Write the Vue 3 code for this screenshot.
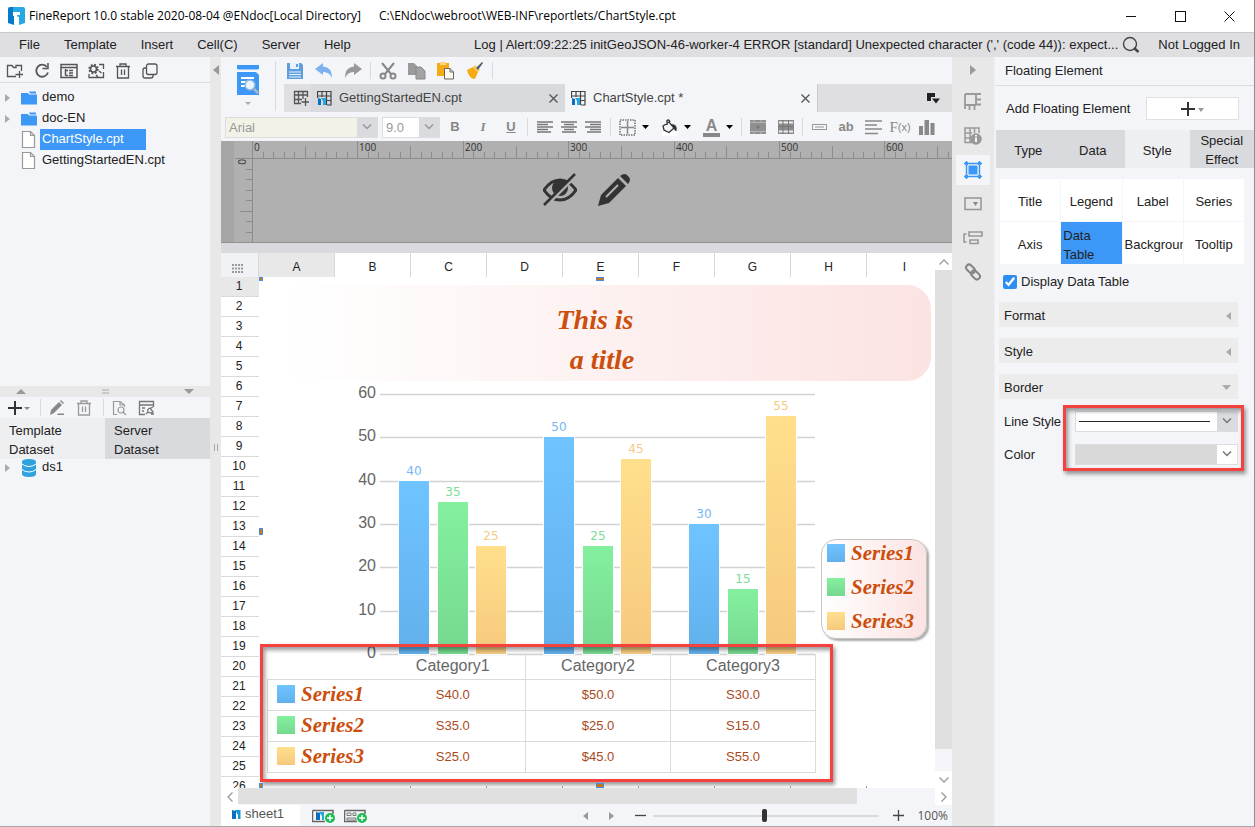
<script setup>
const menus = ['File', 'Template', 'Insert', 'Cell(C)', 'Server', 'Help']
const files = [
  { name: 'demo', folder: true },
  { name: 'doc-EN', folder: true },
  { name: 'ChartStyle.cpt', folder: false, active: true },
  { name: 'GettingStartedEN.cpt', folder: false },
]
const columns = ['A', 'B', 'C', 'D', 'E', 'F', 'G', 'H', 'I']
const rows = Array.from({ length: 26 }, (_, i) => i + 1)

const ticks = Array.from({ length: 67 }, (_, i) => ({
  x: Math.round(31 + i * 10.54),
  len: i % 10 === 0 ? 17 : i % 5 === 0 ? 12 : 6,
  label: i % 10 === 0 ? String(i * 10) : '',
}))
const sideTicks = Array.from({ length: 8 }, (_, i) => ({
  y: Math.round(17 + i * 10.54),
  len: i % 5 === 0 ? 12 : 6,
}))

const axis = [60, 50, 40, 30, 20, 10, 0]
const yOf = (v) => Math.round(273 - (v * 260) / 60)
const series = [
  { name: 'Series1', key: 'blue', label: '#76b8ee', values: [40, 50, 30], cells: ['S40.0', '$50.0', 'S30.0'] },
  { name: 'Series2', key: 'green', label: '#7ddc96', values: [35, 25, 15], cells: ['S35.0', '$25.0', 'S15.0'] },
  { name: 'Series3', key: 'gold', label: '#f4cb84', values: [25, 45, 55], cells: ['S25.0', '$45.0', 'S55.0'] },
]
const bars = series.flatMap((s, si) =>
  s.values.map((v, ci) => ({
    v,
    key: s.key,
    label: s.label,
    x: Math.round(140 + si * 38.5 + ci * 145),
    y: yOf(v),
    h: 273 - yOf(v),
  })),
)
const categories = ['Category1', 'Category2', 'Category3']
const mainTabs = ['Type', 'Data', 'Style', 'Special Effect']
const styleTabs = ['Title', 'Legend', 'Label', 'Series', 'Axis', 'Data Table', 'Backgroun', 'Tooltip']
</script>

<template>
  <div class="app">
    <header class="titlebar">
      <svg class="logo" width="17" height="18" viewBox="0 0 17 18">
        <path d="M0 2Q0 0 2 0H6V18L0 16Z" fill="#0878c8" />
        <path d="M5 0H15Q17 0 17 2V16L11 18V10L5 8Z" fill="#25a9e6" />
        <path d="M5 5H12V8H9V17H6V9H5Z" fill="#fff" />
      </svg>
      <span>FineReport 10.0 stable 2020-08-04 @ENdoc[Local Directory]</span>
      <span class="path">C:\ENdoc\webroot\WEB-INF\reportlets/ChartStyle.cpt</span>
      <div class="winbtns">
        <button aria-label="Minimize"><svg width="11" height="11"><path d="M0 5.500H10" stroke="#111" /></svg></button>
        <button aria-label="Maximize"><svg width="11" height="11"><rect x=".5" y=".5" width="10" height="10" fill="none" stroke="#111" /></svg></button>
        <button aria-label="Close"><svg width="11" height="11"><path d="M.5 .5L10.500 10.500M10.500 .5L.5 10.500" stroke="#111" /></svg></button>
      </div>
    </header>

    <nav class="menubar">
      <button v-for="m in menus" :key="m">{{ m }}</button>
      <span class="log">Log | Alert:09:22:25 initGeoJSON-46-worker-4 ERROR [standard] Unexpected character (',' (code 44)): expect...</span>
      <button aria-label="Search" class="search">
        <svg width="18" height="18" viewBox="0 0 18 18" fill="none" stroke="#444"><circle cx="8" cy="8" r="6.500" stroke-width="1.400" /><path d="M12 12L16.500 16" stroke-width="2.400" /></svg>
      </button>
      <a href="#login">Not Logged In</a>
    </nav>

    <main class="body">
      <aside class="left">
        <div class="tools top-tools">
          <button aria-label="New folder"><svg width="18" height="16" viewBox="0 0 18 16" class="ln"><path d="M10 13.500H1.500V2.500H6L7.500 4.500H10V2.500H15.500V8M9.500 11.500H17M13.500 8V15" stroke-width="1.300" /></svg></button>
          <button aria-label="Refresh"><svg width="16" height="16" viewBox="0 0 16 16" class="ln"><path d="M13 4A6 6 0 1 0 14 9.500" stroke-width="1.800" /><path d="M14 0V5.500H8.500" stroke-width="1.500" /></svg></button>
          <button aria-label="Tree view"><svg width="18" height="16" viewBox="0 0 18 16" class="ln"><path d="M1 1.500H17V14.500H1ZM1 4.500H17" stroke-width="1.500" /><path d="M5.500 6V12.500M5.500 7.500H8M5.500 12.500H8M9 7.500H13M9 10H13M9 12.500H13" stroke-width="1.500" /></svg></button>
          <button aria-label="Settings"><svg width="18" height="16" viewBox="0 0 18 16" class="ln"><circle cx="6.500" cy="6" r="4.200" stroke-dasharray="1.800 1.500" stroke-width="2" /><circle cx="6.500" cy="6" r="3" stroke-width="1.600" /><path d="M12 1.500H16.500V6M2 11V14.500H16.500V9M9 12L11 14M12 8L14.500 10" stroke-width="1.300" /></svg></button>
          <button aria-label="Delete"><svg width="16" height="16" viewBox="0 0 16 16" class="ln"><path d="M1 3.500H15M5 3V1H11V3M2.500 4V15H13.500V4M6.500 6.500V12M9.500 6.500V12" stroke-width="1.300" /></svg></button>
          <button aria-label="Copy"><svg width="16" height="16" viewBox="0 0 16 16" class="ln"><rect x="4.500" y="1" width="10.500" height="10.500" rx="2" stroke-width="1.300" /><path d="M4 5H3Q1 5 1 7V13Q1 15 3 15H9Q11 15 11 13V12" stroke-width="1.300" /></svg></button>
        </div>
        <ul class="tree">
          <li v-for="f in files" :key="f.name">
            <svg class="expander" width="6" height="8"><path v-if="f.folder" d="M0 0L5 4L0 8Z" fill="#aaa" /></svg>
            <svg v-if="f.folder" width="16" height="14" viewBox="0 0 16 14"><path d="M0 2H7L8 3.500H16V13.500H0Z" fill="#3d97f7" /><path d="M8 .5H15V2.500H9Z" fill="#3d97f7" /></svg>
            <svg v-else width="16" height="18" viewBox="0 0 16 18"><path d="M1.500 .5H9.500L13.500 4.500V16.500H1.500ZM9.500 .5V4.500H13.500" fill="#fff" stroke="#999" stroke-width="1.200" /></svg>
            <a href="#file" :class="{ active: f.active }">{{ f.name }}</a>
          </li>
        </ul>
        <div class="divider">
          <svg width="10" height="5"><path d="M0 5L5 0L10 5Z" fill="#999" /></svg>
          <svg width="7" height="5"><path d="M0 1H7M0 4H7" stroke="#aaa" /></svg>
          <svg width="10" height="5"><path d="M0 0L5 5L10 0Z" fill="#999" /></svg>
        </div>
        <div class="tools data-tools">
          <button aria-label="Add dataset"><svg width="24" height="16" viewBox="0 0 24 16"><path d="M8 1V15M1 8H15" stroke="#333" stroke-width="2" /><path d="M17 7H23L20 10Z" fill="#888" /></svg></button>
          <i class="sep"></i>
          <button aria-label="Edit"><svg width="16" height="16" viewBox="0 0 16 16"><path d="M1 15L2 10L10 2L13 5L5 13ZM11 1L12 0L15 3L14 4ZM9 13.500H15V15H8Z" fill="#888" /></svg></button>
          <button aria-label="Delete dataset"><svg width="16" height="16" viewBox="0 0 16 16" fill="none" stroke="#999" stroke-width="1.300"><path d="M1 3.500H15M5 3V1H11V3M2.500 4V15H13.500V4M6.500 6.500V12M9.500 6.500V12" /></svg></button>
          <i class="sep"></i>
          <button aria-label="Preview data"><svg width="15" height="16" viewBox="0 0 15 16" fill="none" stroke="#999" stroke-width="1.200"><path d="M5 14.500H1.500V1.500H8L12.500 5V7M8 1.500V5H12" /><circle cx="9" cy="10" r="3" /><path d="M11 12L14 15" /></svg></button>
          <button aria-label="Configure data"><svg width="17" height="16" viewBox="0 0 17 16" fill="none" stroke="#777" stroke-width="1.300"><path d="M7 14.500H1.500V1.500H15.500V7M1.500 5H15.500M4 8H7M4 11H6" /><path d="M8 14L10 12Q9 9 12 8L15 12Q13 14 10 12M13 14H16M13 8L15 7" /></svg></button>
        </div>
        <div class="ds-tabs">
          <button class="on">Template<br />Dataset</button>
          <button>Server<br />Dataset</button>
        </div>
        <ul class="tree ds">
          <li>
            <svg class="expander" width="6" height="8"><path d="M0 0L5 4L0 8Z" fill="#aaa" /></svg>
            <svg width="16" height="18" viewBox="0 0 16 18"><path d="M1 3Q1 0 8 0T15 3V15Q15 18 8 18T1 15Z" fill="#2ea2dc" /><path d="M1 5Q4 7.500 8 7.500T15 5M1 10.500Q4 13 8 13T15 10.500" fill="none" stroke="#fff" /></svg>
            <a href="#ds1">ds1</a>
          </li>
        </ul>
      </aside>

      <div class="gutter">
        <svg width="6" height="10"><path d="M6 0V10L0 5Z" fill="#999" /></svg>
        <svg width="4" height="7"><path d="M.5 0V7M3.500 0V7" stroke="#aaa" /></svg>
      </div>

      <section class="center">
        <div class="topbar">
          <button class="preview" aria-label="Preview">
            <svg width="24" height="44" viewBox="0 0 24 44"><path d="M1 1H23V4.500L22 5.500H2L1 4.500Z" fill="#3d97f7" /><path d="M1 8H20L23 11V31H1Z" fill="#3d97f7" /><path d="M5 14H18M5 18H14M5 22H10" stroke="#fff" stroke-width="2" /><circle cx="14" cy="21" r="5" fill="#eaf4ff" stroke="#8bb5df" stroke-width="1.500" /><path d="M18 25L22 29" stroke="#aeb9c4" stroke-width="2.500" /><path d="M9 38H15L12 41Z" fill="#aaa" /></svg>
          </button>
          <div class="topright">
            <div class="quick">
              <button aria-label="Save"><svg width="18" height="18" viewBox="0 0 18 18"><path d="M1 1H15L17 3V17H1Z" fill="#5f9ddd" /><path d="M4 1H13V7H4Z" fill="#e8f3ff" /><path d="M10 2H12V5H10Z" fill="#5f9ddd" /><path d="M3 10H15M3 12.500H15M3 15H15" stroke="#e8f3ff" /></svg></button>
              <button aria-label="Undo"><svg width="18" height="16" viewBox="0 0 18 16"><path d="M0 6L8 0V3.500Q17 4 17 15Q14 8.500 8 9V12Z" fill="#7cb3ef" /></svg></button>
              <button aria-label="Redo"><svg width="18" height="16" viewBox="0 0 18 16"><path d="M18 6L10 0V3.500Q1 4 1 15Q4 8.500 10 9V12Z" fill="#999" /></svg></button>
              <i class="sep"></i>
              <button aria-label="Cut"><svg width="18" height="18" viewBox="0 0 18 18" fill="none" stroke="#888" stroke-width="2"><path d="M3 1L12 12M15 1L6 12" /><circle cx="4" cy="14" r="2.500" /><circle cx="14" cy="14" r="2.500" /></svg></button>
              <button aria-label="Copy cells"><svg width="18" height="18" viewBox="0 0 18 18"><path d="M0 1H6L9 4V13H0Z" fill="#9a9a9a" /><path d="M8 5H13L17 9V17H8Z" fill="#a3a3a3" stroke="#888" /></svg></button>
              <button aria-label="Paste"><svg width="18" height="18" viewBox="0 0 18 18"><path d="M0 1H12V14H0Z" fill="#f5ab13" /><path d="M3 0H9V3H3Z" fill="#f9d48a" /><path d="M7.500 6.500H13L16.500 10V17H7.500ZM13 6.500V10H16.500" fill="#fffbe8" stroke="#666" /></svg></button>
              <button aria-label="Format painter"><svg width="18" height="18" viewBox="0 0 18 18"><path d="M1 8L7 5L12 10L9 17Q3 17 1 8Z" fill="#f5ab13" /><path d="M7 5L9 3L14 8L12 10Z" fill="#f9c95e" /><path d="M10 6L16 0L17 1L12 8Z" fill="#555e70" /></svg></button>
              <i class="sep"></i>
            </div>
            <div class="tabs">
              <button class="newtab" aria-label="New template"><svg width="16" height="16" viewBox="0 0 16 16" class="ln"><path d="M8 13.500H1.500V1.500H14.500V7M1.500 5H14.500M1.500 9.500H9M5.500 1.500V13.500M10 1.500V9M8.500 12H16M12.500 8V16" stroke-width="1.300" /></svg></button>
              <div class="tab" v-for="(t, i) in ['GettingStartedEN.cpt', 'ChartStyle.cpt *']" :key="t" :class="{ on: i === 1 }">
                <svg width="15" height="15" viewBox="0 0 15 15"><path d="M.5 7V.5H14V14H10M.5 5H14M5 .5V6M9.500 .5V14M9.500 9.500H14" fill="none" stroke="#444" stroke-width="1.200" /><path d="M1 7L4 8V14H1Z" fill="#0870be" /><path d="M4 7H9V14H6V10Z" fill="#25a6e5" /></svg>
                <button class="name">{{ t }}</button>
                <button class="x" aria-label="Close tab"><svg width="9" height="9"><path d="M.5 .5L8.500 8.500M8.500 .5L.5 8.500" stroke="#555" stroke-width="1.300" /></svg></button>
              </div>
              <button class="more" aria-label="Tab list"><svg width="13" height="11" viewBox="0 0 13 11"><path d="M0 0H8V4H4V8H0Z" fill="#222" /><path d="M5 5.500H13L9 10.500Z" fill="#222" /></svg></button>
            </div>
          </div>
        </div>

        <div class="format">
          <div class="combo font">
            <select aria-label="Font" disabled><option>Arial</option></select>
            <span class="arr"><svg width="10" height="6"><path d="M1 .5L5 4.500L9 .5" fill="none" stroke="#999" stroke-width="1.500" /></svg></span>
          </div>
          <div class="combo size">
            <select aria-label="Font size" disabled><option>9.0</option></select>
            <span class="arr"><svg width="10" height="6"><path d="M1 .5L5 4.500L9 .5" fill="none" stroke="#999" stroke-width="1.500" /></svg></span>
          </div>
          <div class="g biu">
            <button><b>B</b></button><button><em>I</em></button><button><u>U</u></button>
          </div>
          <i class="sep"></i>
          <div class="g al">
            <button aria-label="Align left"><svg width="16" height="12"><path d="M0 1H16M0 3.500H11M0 6H16M0 8.500H11M0 11H14" stroke="#777" stroke-width="1.300" /></svg></button>
            <button aria-label="Align center"><svg width="16" height="12"><path d="M0 1H16M3 3.500H13M0 6H16M3 8.500H13M1 11H15" stroke="#777" stroke-width="1.300" /></svg></button>
            <button aria-label="Align right"><svg width="16" height="12"><path d="M0 1H16M5 3.500H16M0 6H16M5 8.500H16M2 11H16" stroke="#777" stroke-width="1.300" /></svg></button>
          </div>
          <i class="sep"></i>
          <div class="g split">
            <button aria-label="Borders"><svg width="17" height="17"><rect x="1" y="1" width="15" height="15" fill="none" stroke="#333" stroke-dasharray="1.500 1" /><path d="M8.500 2V15M2 8.500H15" stroke="#888" stroke-width="1.500" /></svg><svg width="7" height="4"><path d="M0 0H7L3.500 4Z" /></svg></button>
            <button aria-label="Fill colour"><svg width="17" height="17"><path d="M1 13H17V17H1Z" fill="#fff" /><path d="M2 7L8 3L13 9L8 13.500L3 11ZM6 6V1.500Q8 0 9 3" fill="none" stroke="#333" stroke-width="1.300" /><path d="M10 5Q17 5 15.500 12Q13 12 13 9Z" fill="#333" /></svg><svg width="7" height="4"><path d="M0 0H7L3.500 4Z" /></svg></button>
            <button aria-label="Font colour"><span class="fa">A</span><svg width="7" height="4"><path d="M0 0H7L3.500 4Z" /></svg></button>
          </div>
          <i class="sep"></i>
          <div class="g biu">
            <button aria-label="Merge"><svg width="16" height="14"><rect width="16" height="14" fill="#909090" /><path d="M0 2.500H16M0 11.500H16M4 0V3M11 0V3M4 11V14M11 11V14" stroke="#b4b4b4" /><path d="M8 5V9M6 7H10" stroke="#777" /></svg></button>
            <button aria-label="Unmerge"><svg width="16" height="14"><rect width="16" height="14" fill="#8c8c8c" /><path d="M1 2.500H15M1 11.500H15" stroke="#eee" stroke-width="2" /><path d="M0 6.500H16M5 0V14M10.500 0V14" stroke="#777" /></svg></button>
          </div>
          <i class="sep"></i>
          <div class="g last">
            <button aria-label="Text field"><svg width="15" height="6"><rect x=".5" y=".5" width="14" height="5" fill="none" stroke="#999" /><path d="M3 3H12" stroke="#999" /></svg></button>
            <button class="ab">ab</button>
            <button aria-label="Rich text"><svg width="17" height="15"><path d="M0 1H17M0 5H12M0 9H17M0 13.500H13" stroke="#888" stroke-width="1.500" /></svg></button>
            <button class="fx">F<small>(x)</small></button>
            <button aria-label="Chart"><svg width="16" height="15"><path d="M0 6H4V15H0ZM5.500 0H10V15H5.500ZM11.500 3H15.500V15H11.500Z" fill="#888" /></svg></button>
          </div>
        </div>

        <div class="param">
          <svg class="rulers" width="100%" height="102">
            <rect width="13" height="102" fill="#a6a6a6" />
            <path d="M14 17.500H2000M31.500 0V102" stroke="#8a8a8a" />
            <g v-for="t in ticks" :key="t.x">
              <path :d="`M${t.x + 0.5} 17V${17 - t.len}`" stroke="#8c8c8c" />
              <text v-if="t.label" :x="t.x + 2" y="10">{{ t.label }}</text>
            </g>
            <path v-for="t in sideTicks" :key="t.y" :d="`M31 ${t.y + 0.5}H${31 - t.len}`" stroke="#8c8c8c" />
            <text transform="translate(17 18) rotate(90)">0</text>
            <path d="M0 101.500H2000" stroke="#919191" />
          </svg>
          <div class="param-actions">
            <button aria-label="Hide"><svg width="34" height="34" viewBox="0 0 34 34"><path d="M1 17Q8 7 17 7T33 17Q26 27 17 27T1 17Z" fill="none" stroke="#333" stroke-width="3" /><circle cx="17" cy="15" r="8" fill="#333" /><path d="M3 33L35 1" stroke="#b0b0b0" stroke-width="3" /><path d="M1 32L32 1" stroke="#333" stroke-width="2.500" /></svg></button>
            <button aria-label="Edit"><svg width="34" height="34" viewBox="0 0 34 34"><path d="M1 33L4 22L21 5L29 13L12 30Z" fill="#333" /><path d="M9 24L21 12" stroke="#b0b0b0" stroke-width="2" /><path d="M23 3Q28 -1 31 3Q35 6 31 11Z" fill="#333" /></svg></button>
          </div>
        </div>

        <div class="sheetwrap">
          <div class="sheet">
            <div class="cols">
              <span class="corner"><svg width="11" height="9"><path d="M0 1H11M0 4.500H11M0 8H11" stroke="#999" stroke-width="2" stroke-dasharray="2 1" /></svg></span>
              <span v-for="c in columns" :key="c" class="col" :class="{ sel: c === 'A' }">{{ c }}</span>
            </div>
            <div class="grid">
              <div class="rows">
                <span v-for="r in rows" :key="r" :class="{ sel: r === 1 }">{{ r }}</span>
              </div>
              <div class="canvas">
                <div class="chart">
                  <h1 class="ctitle">This is<br />&nbsp;&nbsp;a title</h1>
                  <svg class="plot" width="676" height="273">
                    <defs>
                      <linearGradient id="blue" x2="0" y2="1"><stop stop-color="#6fc4ff" /><stop offset="1" stop-color="#61b0ec" /></linearGradient>
                      <linearGradient id="green" x2="0" y2="1"><stop stop-color="#84f09f" /><stop offset="1" stop-color="#75d88f" /></linearGradient>
                      <linearGradient id="gold" x2="0" y2="1"><stop stop-color="#ffdf8c" /><stop offset="1" stop-color="#f6c97d" /></linearGradient>
                    </defs>
                    <g v-for="a in axis" :key="a">
                      <path :d="`M121 ${yOf(a) + 0.5}H556`" stroke="#d2d2d2" stroke-width="1.500" />
                      <text class="ax" x="117" :y="yOf(a) + 4">{{ a }}</text>
                    </g>
                    <g v-for="b in bars" :key="b.x">
                      <rect :x="b.x - 1" :y="b.y - 1" width="32" :height="b.h + 2" fill="#fff" />
                      <rect :x="b.x" :y="b.y" width="30" :height="b.h" :fill="`url(#${b.key})`" />
                      <text class="val" :x="b.x + 15" :y="b.y - 6" :fill="b.label">{{ b.v }}</text>
                    </g>
                  </svg>
                  <table class="dtable">
                    <thead>
                      <tr><th></th><th v-for="c in categories" :key="c">{{ c }}</th></tr>
                    </thead>
                    <tbody>
                      <tr v-for="s in series" :key="s.name">
                        <th><span class="item"><i class="sw" :class="s.key"></i>{{ s.name }}</span></th>
                        <td v-for="c in s.cells" :key="c">{{ c }}</td>
                      </tr>
                    </tbody>
                  </table>
                  <div class="legend">
                    <span v-for="s in series" :key="s.name" class="item"><i class="sw" :class="s.key"></i>{{ s.name }}</span>
                  </div>
                  <div class="mark data-mark"></div>
                </div>
                <i class="h h1"></i><i class="h h2"></i><i class="h h3"></i><i class="h h4"></i><i class="h h5"></i>
              </div>
            </div>
          </div>
          <div class="vscroll">
            <button aria-label="Scroll up"><svg width="10" height="6"><path d="M.5 5.500L5 1L9.500 5.500" fill="none" stroke="#999" stroke-width="1.300" /></svg></button>
            <i></i>
            <button aria-label="Scroll down"><svg width="10" height="6"><path d="M.5 .5L5 5L9.500 .5" fill="none" stroke="#999" stroke-width="1.300" /></svg></button>
          </div>
        </div>

        <div class="hscroll">
          <button aria-label="Scroll left"><svg width="6" height="10"><path d="M5.500 .5L1 5L5.500 9.500" fill="none" stroke="#999" stroke-width="1.300" /></svg></button>
          <i></i>
          <button aria-label="Scroll right"><svg width="6" height="10"><path d="M.5 .5L5 5L.5 9.500" fill="none" stroke="#999" stroke-width="1.300" /></svg></button>
        </div>

        <footer class="status">
          <button class="sheettab"><svg width="9" height="9"><path d="M0 0L4 1V9H0Z" fill="#0870be" /><path d="M3 0H8.500V9H6V5Z" fill="#1496d8" /></svg>sheet1</button>
          <button aria-label="Add sheet"><svg width="24" height="14"><path d="M.5 1.500H21V5M.5 1.500V12.500H13" fill="none" stroke="#666" stroke-width="1.500" /><path d="M4 3L8 4V11H4Z" fill="#0870be" /><path d="M7 3H12V11H10V7Z" fill="#25a6e5" /><circle cx="18" cy="9" r="5" fill="#1fbd55" /><path d="M15 9H21M18 6V12" stroke="#fff" stroke-width="1.500" /></svg></button>
          <button aria-label="Add form"><svg width="24" height="14"><path d="M.5 1.500H21V5M.5 1.500V12.500H13" fill="none" stroke="#666" stroke-width="1.500" /><path d="M3 4H7V6.500H3ZM9 4H12V6.500H9ZM3 9H12V11H3Z" fill="none" stroke="#777" /><circle cx="18" cy="9" r="5" fill="#1fbd55" /><path d="M15 9H21M18 6V12" stroke="#fff" stroke-width="1.500" /></svg></button>
          <div class="zoom">
            <button aria-label="Previous sheet"><svg width="5" height="8"><path d="M5 0V8L0 4Z" fill="#999" /></svg></button>
            <button aria-label="Next sheet"><svg width="5" height="8"><path d="M0 0V8L5 4Z" fill="#999" /></svg></button>
            <button aria-label="Zoom out"><svg width="11" height="11"><path d="M0 5.500H11" stroke="#444" stroke-width="1.300" /></svg></button>
            <input type="range" min="0" max="100" value="49" aria-label="Zoom" />
            <button aria-label="Zoom in"><svg width="11" height="11"><path d="M0 5.500H11M5.500 0V11" stroke="#444" stroke-width="1.300" /></svg></button>
            <span>100%</span>
          </div>
        </footer>
      </section>

      <nav class="strip">
        <button aria-label="Collapse" class="fold"><svg width="6" height="10"><path d="M0 0V10L6 5Z" fill="#999" /></svg></button>
        <button aria-label="Cell element"><svg width="18" height="18" fill="none" stroke="#999" stroke-width="1.800"><path d="M1 1H17M1 1V16M12 1V12M1 12H12M12 6.500H17M12 11.500H17M5.500 12V17M10.500 12V17" /></svg></button>
        <button aria-label="Cell attributes"><svg width="18" height="18" fill="none" stroke="#999" stroke-width="1.500"><path d="M8 15.500H1V1H15V6M1 6H8M1 11H7M6 1V15M10.500 1V6" /><circle cx="12" cy="12" r="5" fill="#999" /><path d="M12 8V9.500M12 10.500V15" stroke="#fff" stroke-width="1.800" /></svg></button>
        <button aria-label="Floating element" class="on"><svg width="18" height="18"><rect x="4.500" y="4.500" width="9" height="9" fill="#3d97f7" /><path d="M2.500 0V18M15.500 0V18M0 2.500H18M0 15.500H18" stroke="#3d97f7" stroke-width="1.500" /><path d="M1 1H4V4H1ZM14 1H17V4H14ZM1 14H4V17H1ZM14 14H17V17H14Z" fill="#3d97f7" /></svg></button>
        <button aria-label="Widget settings"><svg width="18" height="14"><rect x="1" y="1" width="16" height="11.500" fill="none" stroke="#999" stroke-width="1.600" /><path d="M9 5H14L11.500 9Z" fill="#888" /></svg></button>
        <button aria-label="Condition attributes"><svg width="20" height="14" fill="none" stroke="#999" stroke-width="1.600"><path d="M6 1H19V5H6ZM7 9H15V12.500H7ZM3.500 3H1V11H3.500" /></svg></button>
        <button aria-label="Hyperlink"><svg width="18" height="18" fill="none" stroke="#858585" stroke-width="2"><rect x="1.500" y="3" width="10" height="6" rx="3" transform="rotate(45 6.500 6)" /><rect x="6.500" y="9" width="10" height="6" rx="3" transform="rotate(45 11.500 12)" /></svg></button>
      </nav>

      <aside class="right">
        <h2>Floating Element</h2>
        <div class="add">
          <span id="add-label">Add Floating Element</span>
          <button aria-labelledby="add-label"><svg width="24" height="14"><path d="M7 0V14M0 7H14" stroke="#333" stroke-width="2" /><path d="M17 6H23L20 10Z" fill="#999" /></svg></button>
        </div>
        <div class="maintabs">
          <button v-for="t in mainTabs" :key="t" :class="{ on: t === 'Style' }">{{ t }}</button>
        </div>
        <div class="styletabs">
          <button v-for="t in styleTabs" :key="t" :class="{ on: t === 'Data Table', clip: t === 'Backgroun' }">{{ t }}</button>
        </div>
        <label class="check"><input type="checkbox" checked />Display Data Table</label>
        <button class="fold-row">Format<svg width="6" height="8"><path d="M6 0V8L1 4Z" fill="#aaa" /></svg></button>
        <button class="fold-row">Style<svg width="6" height="8"><path d="M6 0V8L1 4Z" fill="#aaa" /></svg></button>
        <button class="fold-row">Border<svg width="9" height="5"><path d="M0 0H9L4.500 5Z" fill="#aaa" /></svg></button>
        <div class="fields">
          <label for="line">Line Style</label>
          <div class="combo line">
            <select id="line"></select>
            <i class="stroke"></i>
            <span class="arr"><svg width="10" height="6"><path d="M1 .5L5 4.500L9 .5" fill="none" stroke="#777" stroke-width="1.500" /></svg></span>
          </div>
          <label for="color">Color</label>
          <div class="combo color">
            <select id="color"></select>
            <span class="arr"><svg width="10" height="6"><path d="M1 .5L5 4.500L9 .5" fill="none" stroke="#777" stroke-width="1.500" /></svg></span>
          </div>
          <div class="mark field-mark"></div>
        </div>
      </aside>
    </main>
  </div>
</template>

<style>
html, body { margin: 0; height: 100%; }
</style>

<style scoped>
* { box-sizing: border-box; }
.app { height: 100vh; display: flex; flex-direction: column; overflow: hidden; background: #f4f5f8; color: #222; font: 13px/20px "Liberation Sans", Arial, sans-serif; border-right: 1px solid #8f8f8f; border-bottom: 1px solid #a8a8a8; }
button { border: 0; padding: 0; margin: 0; background: none; font: inherit; color: inherit; display: inline-flex; align-items: center; justify-content: center; flex: none; }
a { color: inherit; text-decoration: none; }
svg { flex: none; display: block; }
ul { list-style: none; margin: 0; padding: 0; }
.ln { fill: none; stroke: #555; stroke-width: 1.200; }
.sep { width: 1px; background: #dadadd; flex: none; }

.titlebar { flex: none; height: 33px; background: #fff; border-bottom: 1px solid #c9c9c9; display: flex; align-items: center; padding-left: 8px; font: 12px/18px "Open Sans", "Noto Sans", sans-serif; color: #000; white-space: nowrap; }
.logo { margin-right: 4px; }
.path { margin-left: 18px; }
.winbtns { margin-left: auto; display: flex; }
.winbtns button { width: 49px; height: 32px; }

.menubar { flex: none; height: 24px; background: #dfdfe2; display: flex; align-items: center; gap: 24px; padding: 0 14px 0 19px; white-space: nowrap; }
.log { margin-left: auto; }
.search { margin: 0 -6px 0 -20px; }

.body { flex: 1; min-height: 0; display: grid; grid-template-columns: 210px 11px minmax(0, 1fr) 43px 259px; grid-template-rows: minmax(0, 1fr); }

.left { display: flex; flex-direction: column; min-width: 0; }
.tools { display: flex; align-items: center; flex: none; }
.top-tools { height: 26px; border-bottom: 1px solid #dcdde0; padding: 2px 0 0 4px; }
.top-tools button { width: 22px; margin-right: 5px; }
.top-tools + .tree { height: 303px; padding-top: 4px; }
.tree li { height: 21px; display: flex; align-items: center; }
.tree .expander { margin: 0 10px 0 5px; }
.tree a { margin-left: 3px; height: 21px; line-height: 20px; padding-left: 2px; }
.tree a.active { width: 106px; background: #3d97f7; color: #fff; }
.divider { flex: none; height: 11px; background: #e8e8e8; display: flex; align-items: center; justify-content: space-between; padding: 0 16px; }
.data-tools { height: 21px; gap: 6px; padding-left: 7px; }
.data-tools .sep { height: 17px; margin: 0 -1px 0 3px; }
.data-tools button { min-width: 21px; }
.ds-tabs { flex: none; display: grid; grid-template-columns: 1fr 1fr; height: 39px; }
.ds-tabs button { justify-content: flex-start; text-align: left; padding: 3px 0 0 9px; line-height: 19px; background: #d9dadd; }
.ds-tabs .on { background: #eeeff1; }

.gutter { background: #e8e8e8; display: flex; flex-direction: column; justify-content: space-between; align-items: center; padding: 8px 0 375px; }

.center { display: flex; flex-direction: column; min-width: 0; min-height: 0; }
.topbar { flex: none; height: 56px; display: flex; }
.preview { width: 55px; height: 50px; margin: 4px 8px 0 0; border-right: 1px solid #dadadd; align-items: flex-start; padding-top: 3px; }
.topright { flex: 1; min-width: 0; display: flex; flex-direction: column; }
.quick { height: 27px; display: flex; gap: 7px; align-items: center; }
.quick button { width: 22px; }
.quick .sep { height: 17px; margin: 0 -1px; }
.tabs { height: 28px; background: #dfdfe2; display: flex; }
.newtab { width: 27px; padding-left: 6px; }
.tab { width: 254px; background: #d9dadd; color: #444; display: flex; align-items: center; padding: 0 7px 0 6px; }
.tab.on { background: #f4f5f8; border-right: 1px solid #ccc; width: 253px; }
.tab .name { margin-left: 7px; }
.tab .x { margin-left: auto; }
.more { margin-left: auto; padding-right: 12px; }

.format { flex: none; height: 28px; display: flex; align-items: center; padding-left: 4px; color: #888; }
.format .sep { height: 18px; margin: 0 5px; }
.combo { position: relative; display: flex; height: 21px; border: 1px solid #dcdde0; background: #fff; }
.combo select { appearance: none; border: 0; background: transparent; width: 100%; height: 100%; padding: 0 0 0 3px; font: inherit; color: #999; opacity: 1; }
.combo .arr { position: absolute; right: 0; top: 0; bottom: 0; width: 20px; background: #dadbde; display: flex; align-items: center; justify-content: center; pointer-events: none; }
.font { width: 153px; background: #f2f2e6; margin-right: 4px; }
.size { width: 58px; margin-right: 4px; }
.g { display: flex; align-items: center; }
.biu { gap: 6px; }
.biu button { width: 22px; font-size: 13px; }
.biu em { font-family: "Liberation Serif", serif; font-weight: bold; }
.biu u { font-weight: bold; }
.al button { width: 24px; }
.split { gap: 6px; }
.split button { width: 36px; gap: 6px; }
.split svg { color: #111; }
.fa { width: 17px; height: 19px; border-bottom: 4px solid #888; font: bold 16px/15px "Liberation Sans", sans-serif; }
.last { gap: 5px; }
.last button { width: 22px; }
.ab { font-weight: bold; }
.fx { font: 15px/20px "Liberation Serif", serif; }
.fx small { font: 11px/20px "Liberation Sans", sans-serif; }

.param { flex: none; height: 102px; background: #b0b0b0; position: relative; }
.rulers { overflow: hidden; }
.rulers text { font: 10px "Open Sans", sans-serif; fill: #333; }
.param-actions { position: absolute; inset: 32px 0 auto 0; display: flex; gap: 20px; justify-content: center; }

.sheetwrap { flex: 1; min-height: 0; padding-top: 10px; background: #d9dadd; display: flex; }
.sheet { flex: 1; min-width: 0; background: #fff; overflow: hidden; display: flex; flex-direction: column; }
.cols { flex: none; height: 24px; display: flex; overflow: hidden; }
.corner { flex: none; width: 38px; background: #f1f2f5; border-right: 1px solid #d8d8d8; display: flex; align-items: center; justify-content: center; padding: 6px 4px 0 0; }
.col { flex: none; width: 76px; text-align: center; line-height: 28px; font-size: 12px; border-right: 1px solid #d8d8d8; }
.col.sel { background: #e8e8e8; }
.grid { flex: 1; min-height: 0; display: flex; }
.rows { flex: none; width: 38px; overflow: hidden; }
.rows span { display: block; height: 20px; line-height: 18px; font-size: 12px; text-align: center; padding-right: 2px; border-bottom: 1px solid #dadada; }
.rows .sel { background: #e8e8e8; }
.canvas { flex: 1; min-width: 0; position: relative; overflow: hidden; }
.canvas::after { content: ""; position: absolute; inset: auto 0 0 0; height: 2px; background: repeating-linear-gradient(90deg, transparent 0 75px, #999 75px 76px); }
.chart { position: absolute; left: 0; top: 0; width: 676px; padding-top: 8px; }
.ctitle { margin: 0 4px 0 0; height: 96px; padding-top: 15px; border-radius: 0 24px 24px 0; background: linear-gradient(90deg, #fff 4%, #fbe3e2); text-align: center; font: italic bold 28px/40px "Liberation Serif", serif; color: #cc4e0c; }
.plot { overflow: visible; }
.ax { font: 16px "Liberation Sans", sans-serif; fill: #666; text-anchor: end; }
.val { font: 12px "DejaVu Sans", sans-serif; text-anchor: middle; }
.dtable { margin-left: 8px; width: 549px; table-layout: fixed; border-collapse: collapse; color: #aa4a1c; }
.dtable th, .dtable td { padding: 0; text-align: center; height: 31px; border: 1px solid #dadada; font-weight: normal; line-height: 18px; }
.dtable thead th { height: 25px; font-size: 16px; color: #666; border-top: 0; }
.dtable th:first-child { width: 113px; border-right: 0; }
.dtable tr > :nth-child(2) { border-left: 0; }
.dtable thead th:first-child { border-left: 0; }
.item { display: flex; align-items: center; gap: 6px; font: italic bold 21px/24px "Liberation Serif", serif; color: #cc4e0c; }
.dtable .item { padding: 0 0 2px 9px; }
.sw { width: 18px; height: 18px; flex: none; }
.blue { background: linear-gradient(#6fc4ff, #61b0ec); }
.green { background: linear-gradient(#84f09f, #75d88f); }
.gold { background: linear-gradient(#ffdf8c, #f6c97d); }
.legend { position: absolute; left: 562px; top: 262px; width: 106px; height: 100px; padding: 1px 0 0 5px; display: flex; flex-direction: column; gap: 10px; border: 1px solid #c4c4c4; border-radius: 15px; background: linear-gradient(90deg, #fff, #fbe3e2); box-shadow: 2px 2px 2px #aaa; }
.mark { position: absolute; border: 3px solid #f5423f; box-shadow: 2px 3px 4px rgba(0, 0, 0, .4), inset 2px 3px 4px rgba(0, 0, 0, .4); pointer-events: none; }
.data-mark { left: 1px; top: 367px; width: 573px; height: 138px; }
.h { position: absolute; z-index: 1; width: 4px; height: 4px; background: #c8780f; border: 1px solid #4b8be0; left: 0; }
.h1 { top: 0; }
.h2 { top: 0; left: 337px; width: 8px; }
.h3 { top: 251px; height: 7px; }
.h4 { bottom: 0; height: 5px; }
.h5 { bottom: 0; left: 337px; width: 8px; height: 5px; }

.vscroll { flex: none; width: 17px; display: flex; flex-direction: column; background: #f4f5f8; }
.vscroll button { background: #fff; height: 17px; }
.vscroll i { background: #e0e0e0; flex: none; height: calc(100% - 56px); margin-bottom: auto; }
.hscroll { flex: none; height: 17px; display: flex; background: #f4f5f8; }
.hscroll button { background: #fff; width: 17px; }
.hscroll i { background: #e0e0e0; margin-right: auto; width: calc(100% - 112px); height: 16px; }
.status { flex: none; height: 21px; display: flex; align-items: center; color: #555; }
.sheettab { background: #fff; width: 79px; height: 21px; gap: 4px; padding: 0 5px 3px 0; margin-right: 12px; }
.status > button + button { margin-right: 8px; }
.zoom { margin-left: auto; display: flex; align-items: center; padding-right: 4px; font: 12px/20px "Open Sans", sans-serif; }
.zoom button + button { margin-left: 21px; }
.zoom input { appearance: none; width: 226px; height: 15px; margin: 0 14px 0 7px; background: linear-gradient(#dadadd, #dadadd) center / 100% 2px no-repeat; }
.zoom input::-webkit-slider-thumb { appearance: none; width: 5px; height: 13px; border-radius: 2px; background: #333; }
.zoom span { margin-left: 13px; }

.strip { background: #e8e8e8; border-right: 1px solid #f0f0f0; display: flex; flex-direction: column; align-items: center; gap: 4px; }
.strip button { width: 34px; height: 30px; }
.strip .fold { height: 26px; }
.strip .on { background: #f4f5f8; }

.right { min-width: 0; padding-left: 1px; }
h2 { margin: 0 0 0 -1px; height: 29px; padding: 4px 0 0 10px; font: inherit; border-bottom: 1px solid #dcdde0; }
.add { display: flex; align-items: center; justify-content: space-between; padding: 11px 15px 0 10px; }
.add button { width: 93px; height: 23px; background: #fff; border: 1px solid #e0e0e3; }
.maintabs { display: grid; grid-template-columns: repeat(4, 1fr); margin-top: 10px; height: 38px; }
.maintabs button { background: #d9dadd; line-height: 19px; padding: 2px 9px 0; height: 38px; }
.maintabs .on { background: #eeeff1; }
.styletabs { display: grid; grid-template-columns: repeat(4, minmax(0, 1fr)); gap: 1px; margin: 11px 10px 0 4px; }
.styletabs button { background: #fff; height: 42px; padding-top: 3px; line-height: 19px; overflow: hidden; }
.styletabs .on { background: #3d97f7; text-align: left; padding: 3px 20px 0 2px; }
.styletabs .clip { justify-content: flex-start; padding-left: 2px; white-space: nowrap; }
.check { display: flex; align-items: center; gap: 4px; margin: 8px 0 0 7px; height: 20px; }
.check input { width: 14px; height: 14px; margin: 0; accent-color: #2c8ef0; }
.fold-row { display: flex; justify-content: space-between; width: 239px; height: 25px; margin: 11px 0 0 3px; padding: 2px 7px 0 5px; background: #ececec; }
.check + .fold-row { margin-top: 10px; }
.fields { position: relative; display: grid; grid-template-columns: 67px 163px; gap: 11px 4px; margin: 11px 0 0 8px; align-items: center; }
.fields label { padding-top: 2px; }
.line .stroke { position: absolute; left: 3px; top: 9px; width: 131px; border-top: 1px solid #222; }
.color { background: #d9d9d9; }
.color .arr { background: #fff; }
.field-mark { left: 59px; top: -5px; width: 181px; height: 66px; }
</style>
